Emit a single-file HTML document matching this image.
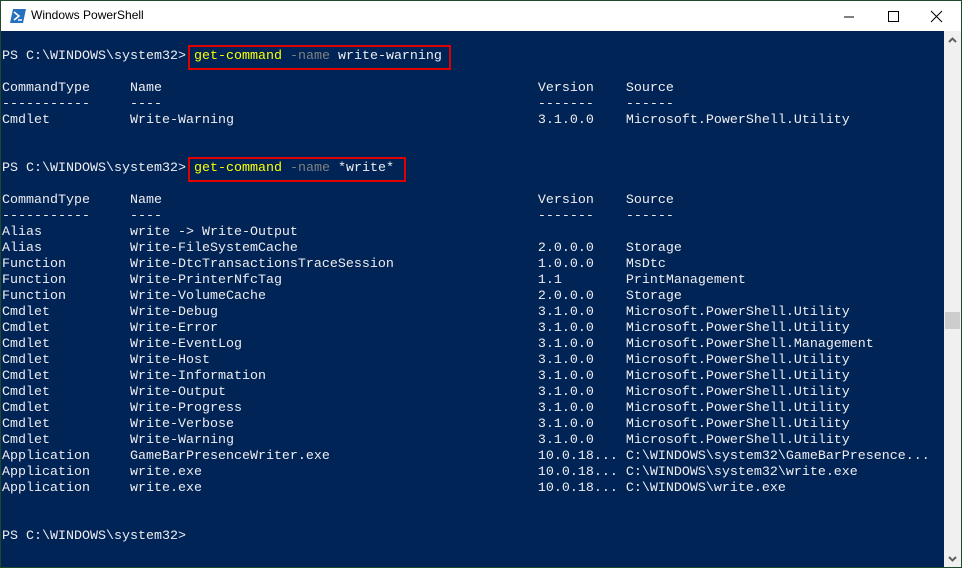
<!DOCTYPE html><html><head><style>
body{margin:0;width:962px;height:568px;background:#fff;position:relative;overflow:hidden;font-family:"Liberation Sans",sans-serif}
#win{position:absolute;left:0;top:0;width:960px;height:566px;border:1px solid #1e4a2c}
#title{position:absolute;left:0;top:0;width:960px;height:30px;background:#fff}
#title span{position:absolute;left:30px;top:7px;font-size:12px;color:#000}
#con{position:absolute;left:0;top:30px;width:943px;height:536px;background:#012456}
#sb{position:absolute;left:943px;top:30px;width:17px;height:536px;background:#f0f0f0}
pre{margin:0;position:absolute;left:1px;top:2px;font-family:"Liberation Mono",monospace;font-size:13.33px;line-height:16px;color:#eeedf0}
.y{color:#ffff00}.g{color:#808080}
.box{position:absolute;border:2px solid #e00000}
</style></head><body><div id="win">
<div id="title"><svg style="position:absolute;left:9px;top:8px" width="16" height="14"><polygon points="3,0 16,0 13,14 0,14" fill="#2671be"/><path d="M4,3 L9,7 L4,11" stroke="#fff" stroke-width="1.6" fill="none"/><path d="M8,11 h4" stroke="#fff" stroke-width="1.4"/></svg><span>Windows PowerShell</span>
<svg style="position:absolute;left:840px;top:8px" width="110" height="16"><path d="M3,8 h10" stroke="#000"/><rect x="47.5" y="2.5" width="10" height="10" fill="none" stroke="#000"/><path d="M90,2 l11,11 M101,2 l-11,11" stroke="#000"/></svg></div>
<div id="con"><pre>

PS C:\WINDOWS\system32&gt; <span class="y">get-command</span> <span class="g">-name</span> write-warning

CommandType     Name                                               Version    Source
-----------     ----                                               -------    ------
Cmdlet          Write-Warning                                      3.1.0.0    Microsoft.PowerShell.Utility


PS C:\WINDOWS\system32&gt; <span class="y">get-command</span> <span class="g">-name</span> *write*

CommandType     Name                                               Version    Source
-----------     ----                                               -------    ------
Alias           write -&gt; Write-Output
Alias           Write-FileSystemCache                              2.0.0.0    Storage
Function        Write-DtcTransactionsTraceSession                  1.0.0.0    MsDtc
Function        Write-PrinterNfcTag                                1.1        PrintManagement
Function        Write-VolumeCache                                  2.0.0.0    Storage
Cmdlet          Write-Debug                                        3.1.0.0    Microsoft.PowerShell.Utility
Cmdlet          Write-Error                                        3.1.0.0    Microsoft.PowerShell.Utility
Cmdlet          Write-EventLog                                     3.1.0.0    Microsoft.PowerShell.Management
Cmdlet          Write-Host                                         3.1.0.0    Microsoft.PowerShell.Utility
Cmdlet          Write-Information                                  3.1.0.0    Microsoft.PowerShell.Utility
Cmdlet          Write-Output                                       3.1.0.0    Microsoft.PowerShell.Utility
Cmdlet          Write-Progress                                     3.1.0.0    Microsoft.PowerShell.Utility
Cmdlet          Write-Verbose                                      3.1.0.0    Microsoft.PowerShell.Utility
Cmdlet          Write-Warning                                      3.1.0.0    Microsoft.PowerShell.Utility
Application     GameBarPresenceWriter.exe                          10.0.18... C:\WINDOWS\system32\GameBarPresence...
Application     write.exe                                          10.0.18... C:\WINDOWS\system32\write.exe
Application     write.exe                                          10.0.18... C:\WINDOWS\write.exe


PS C:\WINDOWS\system32&gt;</pre>
<div class="box" style="left:187px;top:14px;width:259px;height:21px"></div>
<div class="box" style="left:187px;top:126px;width:214px;height:21px"></div>
</div>
<div id="sb"><svg width="17" height="536"><path d="M5,11 l3.5,-3.5 l3.5,3.5" stroke="#606060" stroke-width="2" fill="none"/><rect x="1" y="281" width="15" height="17" fill="#cdcdcd"/><path d="M5,526 l3.5,3.5 l3.5,-3.5" stroke="#606060" stroke-width="2" fill="none"/></svg></div>
</div></body></html>
